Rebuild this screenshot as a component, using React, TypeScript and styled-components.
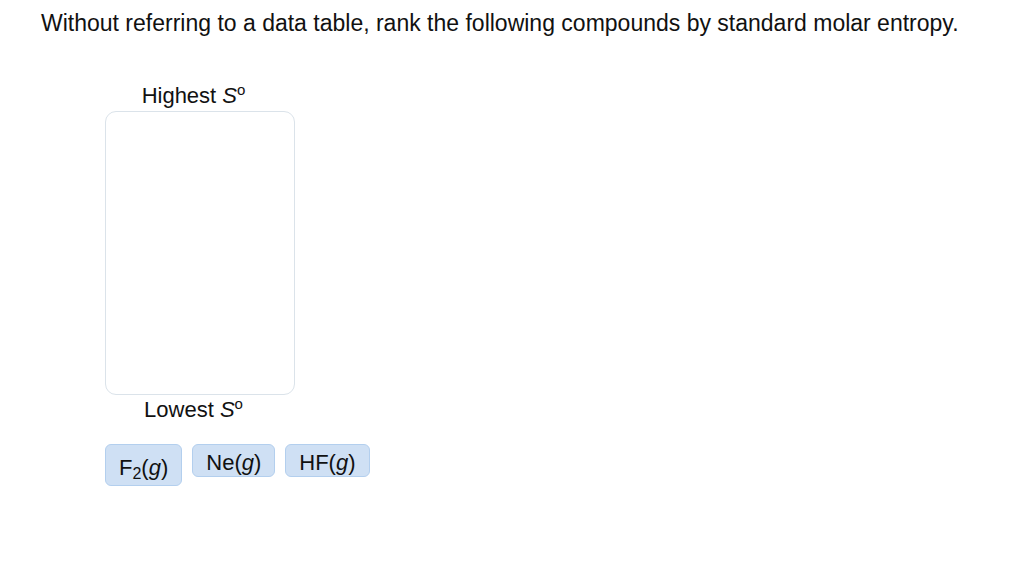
import styled, { createGlobalStyle } from 'styled-components';

const GlobalStyle = createGlobalStyle`
  html, body {
    margin: 0;
    padding: 0;
    background: #fff;
  }
  body {
    font-family: 'Liberation Sans', Arial, sans-serif;
    color: #111;
  }
`;

const StyledPage = styled.div`
  padding: 10px 0 0 41px;
`;

const Question = styled.p`
  margin: 0;
  font-size: 23px;
  line-height: 26px;
`;

const RankColumn = styled.div`
  margin: 47px 0 0 64px;
  width: 190px;
  display: flex;
  flex-direction: column;
  align-items: center;
`;

const Label = styled.div`
  font-size: 22px;
  line-height: 26px;
  padding-right: 13px;
`;

const Sup = styled.span`
  font-size: 15px;
  vertical-align: 8px;
  line-height: 0;
`;

const DropZone = styled.div`
  box-sizing: border-box;
  width: 190px;
  height: 284px;
  margin: 2px 0 2px;
  border: 1px solid #dbe3ea;
  border-radius: 11px;
`;

const Tray = styled.div`
  margin: 21px 0 0 64px;
  display: flex;
  align-items: flex-start;
  gap: 10px;
`;

const Chip = styled.div<{ $tall?: boolean }>`
  font-size: 22px;
  line-height: 23px;
  padding: ${(p) => (p.$tall ? '11px 13px 6px' : '6px 13px 2px')};
  background: #cfe0f4;
  border: 1px solid #b3cfee;
  border-radius: 6px;
`;

const Sub = styled.span`
  font-size: 16px;
  vertical-align: -4px;
  line-height: 0;
`;

const Highest = () => (
  <Label>
    Highest <i>S</i>
    <Sup>o</Sup>
  </Label>
);

const Lowest = () => (
  <Label>
    Lowest <i>S</i>
    <Sup>o</Sup>
  </Label>
);

const App = () => (
  <StyledPage>
    <GlobalStyle />
    <Question>
      Without referring to a data table, rank the following compounds by standard molar entropy.
    </Question>
    <RankColumn>
      <Highest />
      <DropZone />
      <Lowest />
    </RankColumn>
    <Tray>
      <Chip $tall>
        F<Sub>2</Sub>(<i>g</i>)
      </Chip>
      <Chip>
        Ne(<i>g</i>)
      </Chip>
      <Chip>
        HF(<i>g</i>)
      </Chip>
    </Tray>
  </StyledPage>
);

export default App;
